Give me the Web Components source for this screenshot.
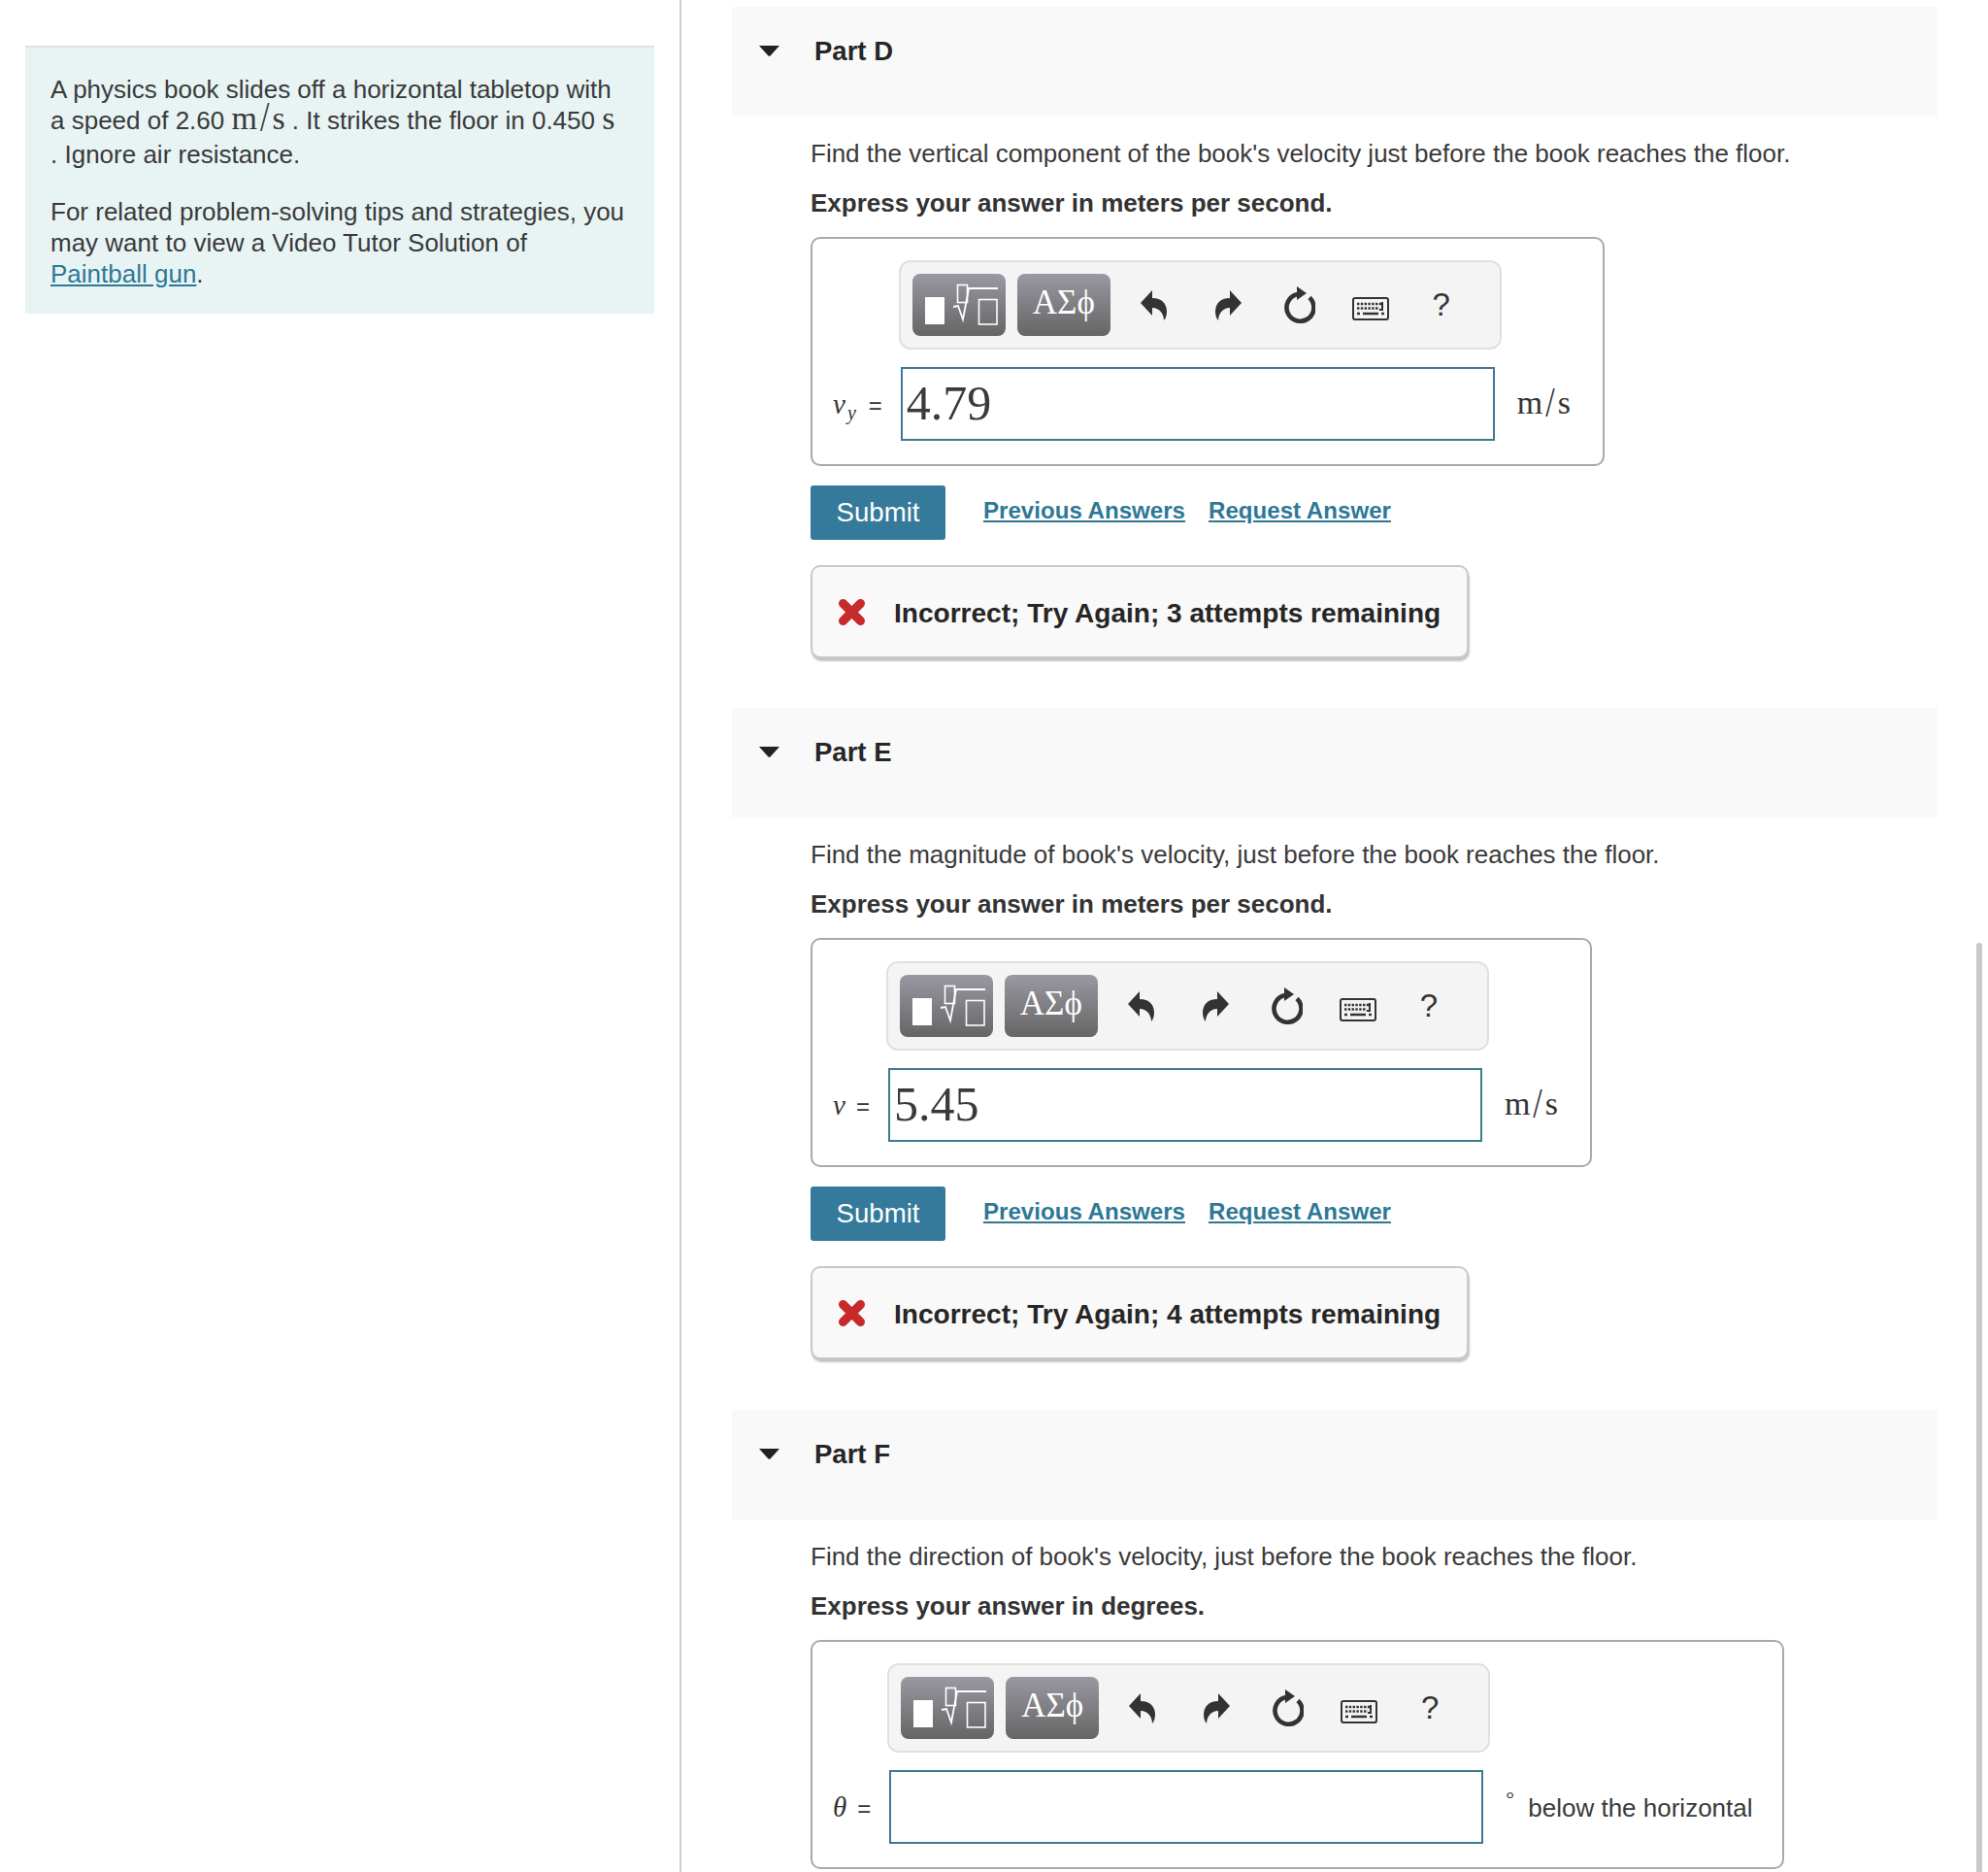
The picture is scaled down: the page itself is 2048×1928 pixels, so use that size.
<!DOCTYPE html>
<html>
<head>
<meta charset="utf-8">
<title>Physics problem</title>
<style>
  html, body { margin: 0; height: 1928px; overflow: hidden; background: #fff; }
  body { font-family: "Liberation Sans", Arial, sans-serif; color: #3a3a3a; }
</style>
</head>
<body>
<app-page>
  <problem-panel slot="left"></problem-panel>
  <part-section name="Part D" question="Find the vertical component of the book's velocity just before the book reaches the floor." express="Express your answer in meters per second." label="vy" value="4.79" unit="m/s" feedback="Incorrect; Try Again; 3 attempts remaining"></part-section>
  <part-section style="margin-bottom:52px" name="Part E" question="Find the magnitude of book's velocity, just before the book reaches the floor." express="Express your answer in meters per second." label="v" value="5.45" unit="m/s" feedback="Incorrect; Try Again; 4 attempts remaining"></part-section>
  <part-section name="Part F" question="Find the direction of book's velocity, just before the book reaches the floor." express="Express your answer in degrees." label="θ" value="" unit="deg"></part-section>
</app-page>

<script>
class AppPage extends HTMLElement {
  constructor() {
    super();
    const shadow = this.attachShadow({ mode: 'open' });
    shadow.innerHTML = `
      <style>
        :host { display: flex; height: 1928px; position: relative; overflow: hidden; }
        .left { width: 700px; flex: none; box-sizing: content-box; border-right: 2px solid #c3d0da; padding-top: 47px; }
        .right { flex: 1; padding: 7px 52px 0 52px; min-width: 0; }
        .scroll { position: absolute; left: 2036px; top: 971px; width: 6px; bottom: 0; background: #c9c9c9; border-radius: 3px 3px 0 0; }
      </style>
      <div class="left"><slot name="left"></slot></div>
      <div class="right"><slot></slot></div>
      <div class="scroll"></div>
    `;
  }
}
customElements.define('app-page', AppPage);

class ProblemPanel extends HTMLElement {
  constructor() {
    super();
    const shadow = this.attachShadow({ mode: 'open' });
    shadow.innerHTML = `
      <style>
        :host {
          display: block;
          margin-left: 26px;
          width: 648px;
          box-sizing: border-box;
          background: #e8f4f4;
          border-top: 2px solid #dde2e2;
          padding: 27px 26px 24px;
          height: 276px;
          font-size: 26px;
          line-height: 32px;
        }
        p { margin: 0 0 27px; }
        .m { font-family: "Liberation Serif", serif; font-size: 34px; line-height: 0; }
        .s { display: inline-block; transform: scaleY(1.3); margin: 0 3px; padding-bottom: 8px; line-height: 26px; }
        a { color: #2e7896; text-decoration: underline; }
      </style>
      <p>A physics book slides off a horizontal tabletop with a speed of 2.60 <span class="m">m<span class="s">/</span>s</span> . It strikes the floor in 0.450 <span class="m">s</span><br>. Ignore air resistance.</p>
      <p>For related problem-solving tips and strategies, you may want to view a Video Tutor Solution of <a href="#">Paintball gun</a>.</p>
    `;
  }
}
customElements.define('problem-panel', ProblemPanel);

class MathToolbar extends HTMLElement {
  constructor() {
    super();
    const shadow = this.attachShadow({ mode: 'open' });
    shadow.innerHTML = `
      <style>
        :host {
          display: flex;
          align-items: center;
          box-sizing: border-box;
          width: 621px;
          height: 92px;
          padding-left: 12px;
          background: #f4f4f4;
          border: 2px solid #e0e0e0;
          border-radius: 12px;
        }
        .btn {
          width: 96px;
          height: 64px;
          box-sizing: border-box;
          flex: none;
          border-radius: 8px;
          background: linear-gradient(#9a98a2, #656565);
          color: #fff;
          display: flex;
          align-items: center;
          justify-content: center;
          font: 35px "Liberation Serif", serif;
          margin-right: 12px;
        }
        .btn svg { display: block; }
        .cell { flex: none; display: flex; justify-content: center; align-items: center; height: 64px; }
        .help { font-size: 33px; color: #333; }
      </style>
      <div class="btn">
        <svg width="96" height="64" viewBox="0 0 96 64" fill="none" stroke="#fff" stroke-width="1.6">
          <rect x="13" y="24" width="20" height="28" fill="#fff" stroke="none"/>
          <rect x="46.5" y="11.5" width="10" height="18"/>
          <path d="M42 34 L47 33 L52 47 L58 15 H88" stroke-width="1.8"/>
          <rect x="68.5" y="26.5" width="18.5" height="25.5"/>
        </svg>
      </div>
      <div class="btn" style="margin-right:6px;padding-bottom:5px">ΑΣϕ</div>
      <div class="cell" style="width:77px">
        <svg width="27" height="31" viewBox="0 0 27 31"><path fill="#333" d="M0 13 L12 0 V8 C22 8 27 14 27 22 C27 25 26 29 24 31 C24 25 20 18 12 18 V26 Z"/></svg>
      </div>
      <div class="cell" style="width:77px">
        <svg width="27" height="31" viewBox="0 0 27 31"><path fill="#333" d="M27 13 L15 0 V8 C5 8 0 14 0 22 C0 25 1 29 3 31 C3 25 7 18 15 18 V26 Z"/></svg>
      </div>
      <div class="cell" style="width:68px">
        <svg width="34" height="38" viewBox="0 0 34 38" fill="none">
          <path d="M16 8 A14 14 0 1 0 28 11.5" stroke="#333" stroke-width="4.6"/>
          <path d="M15 0 L25 7 L15 14 Z" fill="#333"/>
        </svg>
      </div>
      <div class="cell" style="width:80px">
        <svg width="38" height="24" viewBox="0 0 38 24" fill="none" style="margin-top:7px">
          <rect x="1" y="1" width="36" height="22" rx="2" fill="#f4f4f4" stroke="#333" stroke-width="2"/>
          <path d="M5 7 H31" stroke="#333" stroke-width="2.4" stroke-dasharray="2.4 1.4"/>
          <path d="M5 11.5 H28" stroke="#333" stroke-width="2.4" stroke-dasharray="2.4 1.4"/>
          <path d="M31 5 V13 H28" stroke="#333" stroke-width="2"/>
          <path d="M5 17 H8 M11 17 H27 M30 17 H33" stroke="#333" stroke-width="2.4"/>
        </svg>
      </div>
      <div class="cell help" style="width:66px">?</div>
    `;
  }
}
customElements.define('math-toolbar', MathToolbar);

class AnswerBox extends HTMLElement {
  static get observedAttributes() { return ['label', 'value', 'unit']; }
  connectedCallback() { this.render(); }
  attributeChangedCallback() { if (this.shadowRoot) this.render(); }
  render() {
    const shadow = this.shadowRoot || this.attachShadow({ mode: 'open' });
    const label = this.getAttribute('label') || '';
    const value = this.getAttribute('value') || '';
    const unit = this.getAttribute('unit') || '';
    const labelHtml = label === 'vy' ? '<i>v</i><sub>y</sub>' : `<i>${label}</i>`;
    const unitHtml = unit === 'deg'
      ? '<span class="deg">°</span><span class="txt">below the horizontal</span>'
      : '<span class="mu">m<span class="sl">/</span>s</span>';
    shadow.innerHTML = `
      <style>
        :host {
          display: block;
          width: fit-content;
          box-sizing: border-box;
          border: 2px solid #a9a9a9;
          border-radius: 10px;
          padding: 22px 33px 23px 21px;
          height: 236px;
          background: #fff;
        }
        .grid { display: grid; grid-template-columns: auto 612px auto; align-items: center; row-gap: 18px; }
        math-toolbar { grid-column: 2; grid-row: 1; margin-left: -2px; }
        .label { grid-column: 1; grid-row: 2; font: 29px "Liberation Serif", serif; padding-right: 19px; white-space: nowrap; color: #333; }
        .label i { margin-right: 2px; }
        .label sub { font-size: 20px; font-style: italic; line-height: 0; margin-right: 4px; }
        .label .eq { font: 24px "Liberation Sans", sans-serif; margin-left: 9px; }
        .input {
          grid-column: 2;
          grid-row: 2;
          box-sizing: border-box;
          height: 76px;
          border: 2px solid #3f7a92;
          padding-left: 4px;
          font: 50px/70px "Liberation Serif", serif;
          color: #3a3a3a;
        }
        .unit { grid-column: 3; grid-row: 2; padding-left: 23px; display: flex; align-items: center; white-space: nowrap; }
        .mu { font: 34px "Liberation Serif", serif; color: #333; margin-top: -3px; }
        .sl { display: inline-block; transform: scaleY(1.3); margin: 0 3px; }
        .deg { font: 22px "Liberation Serif", serif; margin: -16px 13px 0 0; width: 10px; }
        .txt { font: 26px "Liberation Sans", sans-serif; padding-top: 2px; margin-right: -3px; }
      </style>
      <div class="grid">
        <math-toolbar></math-toolbar>
        <div class="label">${labelHtml}<span class="eq">=</span></div>
        <div class="input">${value}</div>
        <div class="unit">${unitHtml}</div>
      </div>
    `;
  }
}
customElements.define('answer-box', AnswerBox);

class FeedbackBox extends HTMLElement {
  constructor() {
    super();
    const shadow = this.attachShadow({ mode: 'open' });
    shadow.innerHTML = `
      <style>
        :host {
          display: flex;
          align-items: center;
          width: fit-content;
          height: 96px;
          box-sizing: border-box;
          padding: 4px 27px 0 26px;
          background: #f9f9f9;
          border: 2px solid #c9c9c9;
          border-radius: 10px;
          box-shadow: 1px 3px 2px #c4c4c4;
          color: #262626;
          font-weight: bold;
          font-size: 28.06px;
        }
        svg { flex: none; margin-right: 29px; margin-top: -4px; }
      </style>
      <svg width="29" height="29" viewBox="0 0 29 29">
        <path d="M5.5 5.5 L23.5 23.5 M23.5 5.5 L5.5 23.5" stroke="#c62a2a" stroke-width="9" stroke-linecap="round"/>
      </svg>
      <slot></slot>
    `;
  }
}
customElements.define('feedback-box', FeedbackBox);

class PartSection extends HTMLElement {
  connectedCallback() {
    if (this.shadowRoot) return;
    const shadow = this.attachShadow({ mode: 'open' });
    const a = (n) => this.getAttribute(n) || '';
    const feedback = a('feedback');
    shadow.innerHTML = `
      <style>
        :host { display: block; margin-bottom: 51px; }
        .head {
          height: 113px;
          box-sizing: border-box;
          background: #f9f9f9;
          display: flex;
          align-items: flex-start;
          padding: 30px 0 0 28px;
          color: #262626;
          font-weight: bold;
          font-size: 27.5px;
          line-height: 32px;
        }
        .head svg { margin: 10px 36px 0 0; flex: none; }
        .body { padding: 22px 0 0 81px; font-size: 26px; line-height: 32px; }
        p { margin: 0 0 19px; white-space: nowrap; }
        b { color: #333; }
        answer-box { margin-top: 19px; }
        .actions { display: flex; align-items: flex-start; margin-top: 20px; }
        .submit {
          width: 139px;
          height: 56px;
          background: #357a9b;
          border-radius: 3px;
          color: #fff;
          display: flex;
          align-items: center;
          justify-content: center;
          font-size: 27.6px;
          box-sizing: border-box;
        }
        .links { margin: 10px 0 0 39px; display: flex; gap: 24px; font-size: 24.1px; font-weight: bold; line-height: 32px; }
        a { color: #2e7896; text-decoration: underline; }
        feedback-box { margin-top: 26px; }
      </style>
      <div class="head">
        <svg width="21" height="11" viewBox="0 0 21 11"><path d="M0 0 H21 L11.5 10.5 Q10.5 11 9.5 10.5 Z" fill="#222"/></svg>
        <span>${a('name')}</span>
      </div>
      <div class="body">
        <p>${a('question')}</p>
        <p style="margin:0"><b>${a('express')}</b></p>
        <answer-box label="${a('label')}" value="${a('value')}" unit="${a('unit')}"></answer-box>
        ${feedback ? `
        <div class="actions">
          <div class="submit">Submit</div>
          <div class="links"><a href="#">Previous Answers</a><a href="#">Request Answer</a></div>
        </div>
        <feedback-box>${feedback}</feedback-box>` : ''}
      </div>
    `;
  }
}
customElements.define('part-section', PartSection);
</script>
</body>
</html>
